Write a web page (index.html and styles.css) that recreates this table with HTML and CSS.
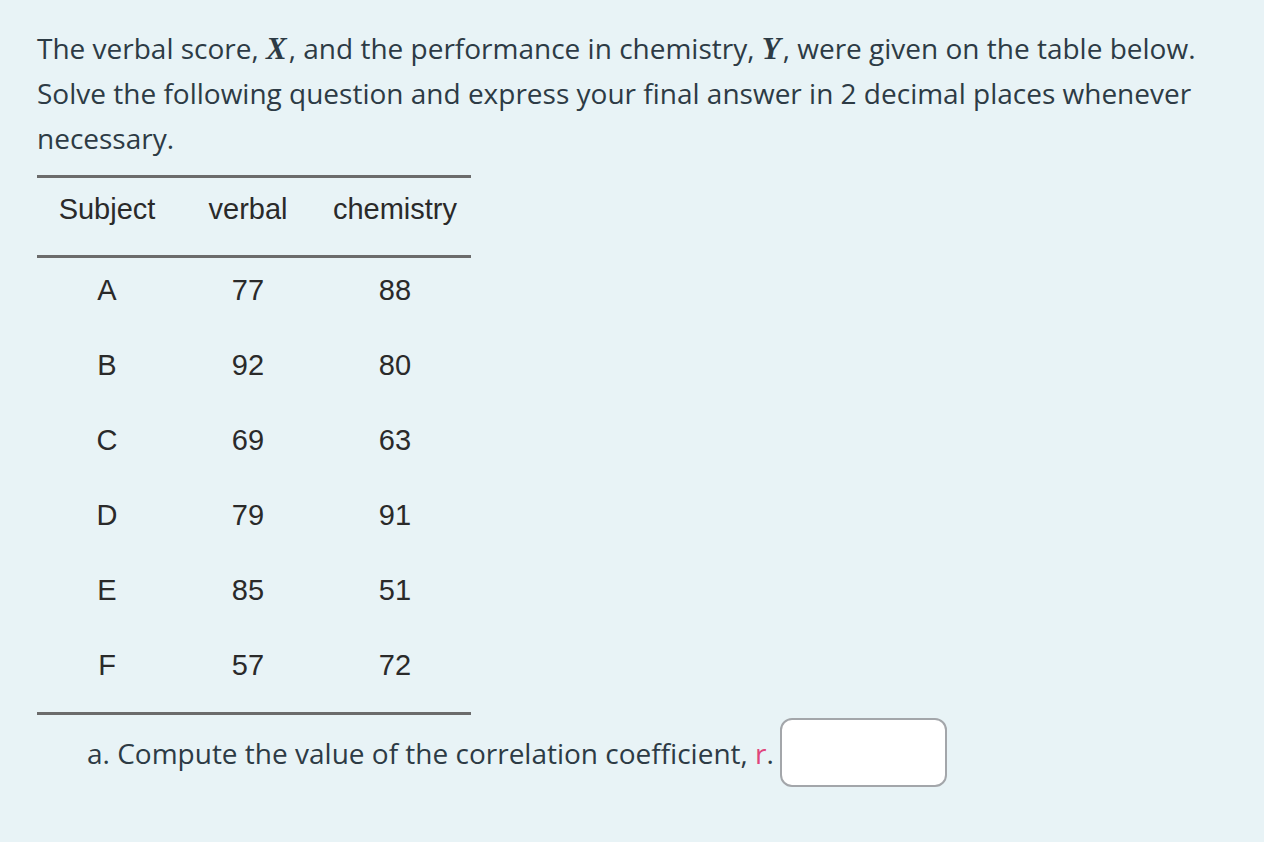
FILE: index.html
```html
<!DOCTYPE html>
<html>
<head>
<meta charset="utf-8">
<link rel="stylesheet" href="styles.css">
</head>
<body>
<div class="page">
  <p class="intro">The verbal score, <span class="math">X</span>, and the performance in chemistry, <span class="math">Y</span>, were given on the table below. Solve the following question and express your final answer in 2 decimal places whenever necessary.</p>
  <table class="data">
    <thead>
      <tr><th>Subject</th><th>verbal</th><th>chemistry</th></tr>
    </thead>
    <tbody>
      <tr><td>A</td><td>77</td><td>88</td></tr>
      <tr><td>B</td><td>92</td><td>80</td></tr>
      <tr><td>C</td><td>69</td><td>63</td></tr>
      <tr><td>D</td><td>79</td><td>91</td></tr>
      <tr><td>E</td><td>85</td><td>51</td></tr>
      <tr><td>F</td><td>57</td><td>72</td></tr>
    </tbody>
  </table>
  <div class="question">
    <span>a. Compute the value of the correlation coefficient, <span class="var">r</span>.</span>
    <input class="answer" type="text">
  </div>
</div>
</body>
</html>
```
FILE: styles.css
```css
html, body {
  margin: 0;
  padding: 0;
  background: #e8f3f6;
}
.page {
  padding: 26px 0 0 37px;
  color: #2d3b45;
  font-family: "Open Sans", "Noto Sans", sans-serif;
}
.intro {
  margin: 0;
  width: 1200px;
  font-size: 28px;
  line-height: 45px;
}
.math {
  font-family: "Liberation Serif", serif;
  font-style: italic;
  font-weight: bold;
  font-size: 31px;
  line-height: 1;
  padding-right: 2px;
}
.data {
  margin-top: 14px;
  border-collapse: collapse;
  width: 434px;
  font-family: "Liberation Sans", Arial, sans-serif;
  font-size: 29px;
  line-height: 29px;
  color: #2a2a2a;
}
.data thead tr {
  border-top: 3px solid #6b6b6b;
  border-bottom: 3px solid #6b6b6b;
}
.data tbody tr:last-child {
  border-bottom: 3px solid #6b6b6b;
}
.data th {
  font-weight: normal;
  padding: 17px 0 31px;
  text-align: center;
  vertical-align: top;
}
.data td {
  padding: 18px 0 28px;
  text-align: center;
  vertical-align: top;
}
.data tbody tr:last-child td {
  padding-bottom: 32px;
}
.data th:nth-child(1), .data td:nth-child(1) { width: 140px; }
.data th:nth-child(2), .data td:nth-child(2) { width: 142px; }
.data th:nth-child(3), .data td:nth-child(3) { width: 152px; }
.question {
  display: flex;
  align-items: center;
  gap: 6px;
  margin: 3px 0 0 50px;
  font-size: 28px;
  line-height: 38px;
}
.var {
  color: #e0457b;
}
.answer {
  width: 167px;
  height: 69px;
  box-sizing: border-box;
  border: 2px solid #a3a6aa;
  border-radius: 12px;
  background: #fff;
  margin: 0;
}
```
